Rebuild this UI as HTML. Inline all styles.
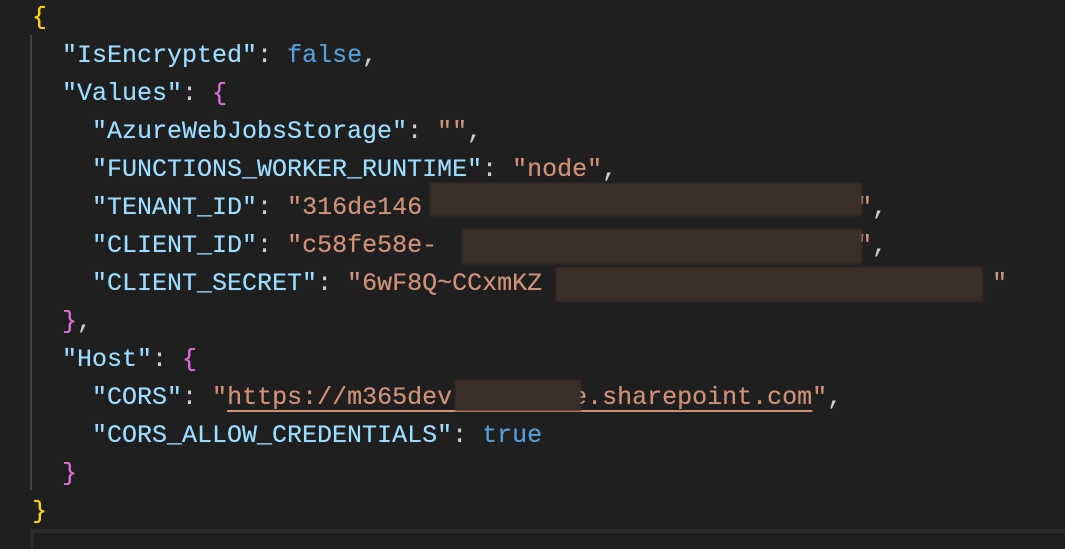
<!DOCTYPE html>
<html><head><style>
body{margin:0;width:1065px;height:549px;background:#1f1f1f;overflow:hidden;position:relative;font-family:"Liberation Mono",monospace;font-size:25px;color:#cccccc}
.l{position:absolute;left:32px;height:38px;line-height:38px;white-space:pre;text-shadow:0 0 0.4px currentColor}
.k{color:#9cdcfe}.s{color:#ce9178}.b{color:#569cd6}.y{color:#ffd700}.p{color:#da70d6}
.g{position:absolute;width:2px;background:#404040}
.bl{position:absolute;background:#3b2f2a;filter:blur(1px)}
</style></head><body>
<div class="g" style="left:30px;top:35px;height:455px"></div>
<div class="l" style="top:-1px"><span class="y">{</span></div>
<div class="l" style="top:37px">  <span class="k">"IsEncrypted"</span>: <span class="b">false</span>,</div>
<div class="l" style="top:75px">  <span class="k">"Values"</span>: <span class="p">{</span></div>
<div class="l" style="top:113px">    <span class="k">"AzureWebJobsStorage"</span>: <span class="s">""</span>,</div>
<div class="l" style="top:151px">    <span class="k">"FUNCTIONS_WORKER_RUNTIME"</span>: <span class="s">"node"</span>,</div>
<div class="l" style="top:189px">    <span class="k">"TENANT_ID"</span>: <span class="s">"316de146                             "</span>,</div>
<div class="l" style="top:227px">    <span class="k">"CLIENT_ID"</span>: <span class="s">"c58fe58e-                            "</span>,</div>
<div class="l" style="top:265px">    <span class="k">"CLIENT_SECRET"</span>: <span class="s">"6wF8Q~CCxmKZ                              "</span></div>
<div class="l" style="top:303px">  <span class="p">}</span>,</div>
<div class="l" style="top:341px">  <span class="k">"Host"</span>: <span class="p">{</span></div>
<div class="l" style="top:379px">    <span class="k">"CORS"</span>: <span class="s">"<span style="text-decoration:underline;text-underline-offset:6px">https://m365dev        e.sharepoint.com</span>"</span>,</div>
<div class="l" style="top:417px">    <span class="k">"CORS_ALLOW_CREDENTIALS"</span>: <span class="b">true</span></div>
<div class="l" style="top:455px">  <span class="p">}</span></div>
<div class="l" style="top:493px"><span class="y">}</span></div>
<div class="bl" style="left:430px;top:183px;width:432px;height:33px"></div>
<div class="bl" style="left:462px;top:229px;width:400px;height:35px"></div>
<div class="bl" style="left:556px;top:267px;width:427px;height:35px"></div>
<div class="bl" style="left:455px;top:380px;width:126px;height:31px"></div>
<div style="position:absolute;left:30px;top:529px;width:1035px;height:20px;background:#2a2a2a"></div>
<div style="position:absolute;left:34px;top:533px;width:1031px;height:16px;background:#1f1f1f"></div>
</body></html>
